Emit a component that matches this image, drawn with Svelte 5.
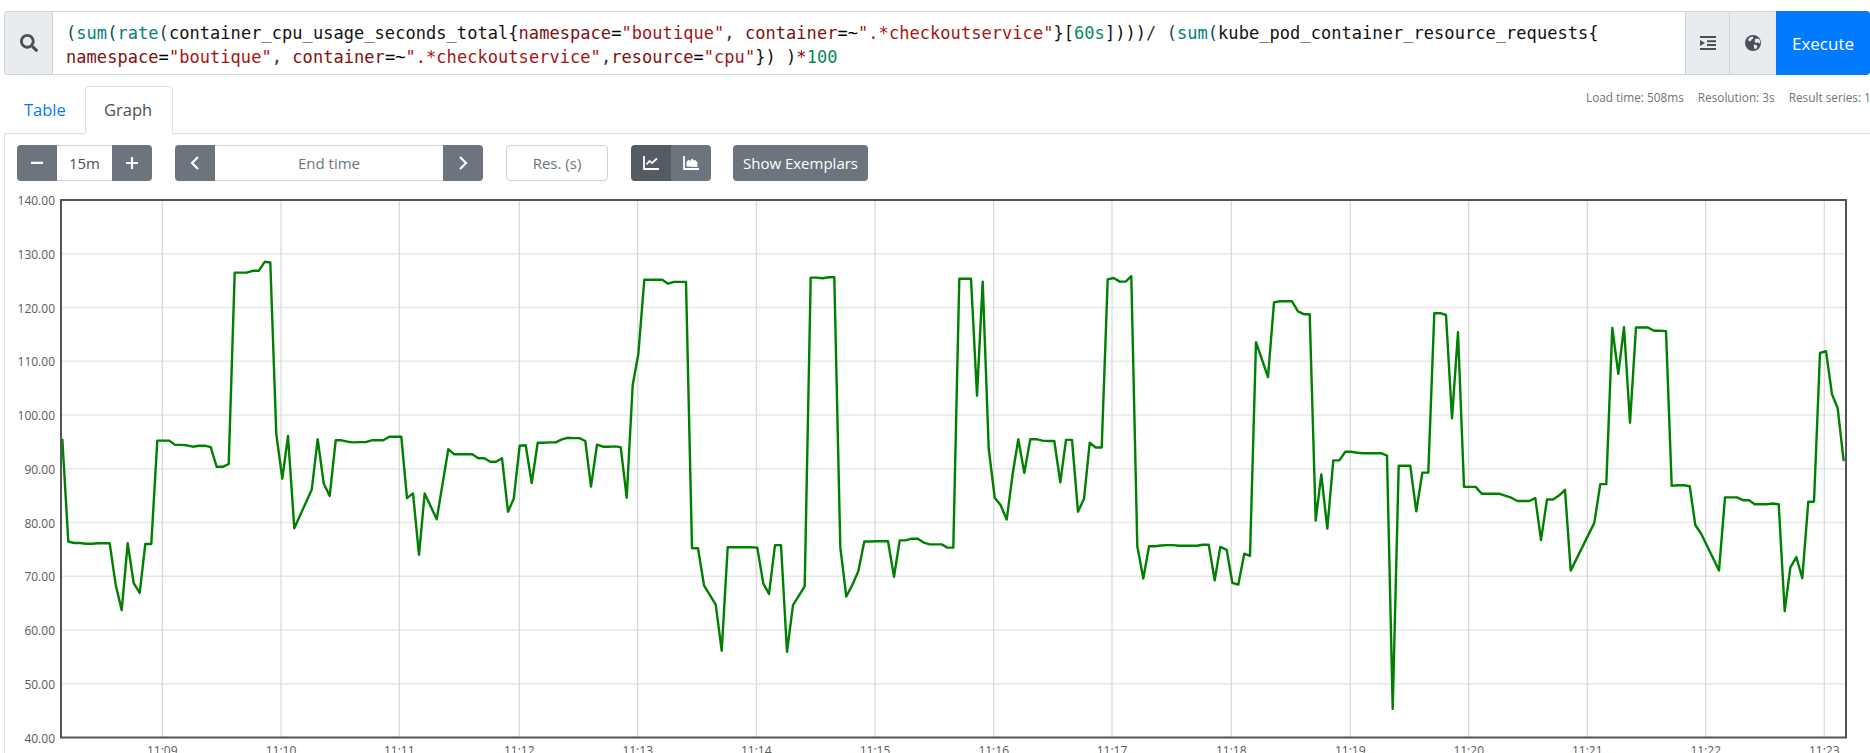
<script>
	// points are read off the reference in crop coordinates, grouped by crop offset
	const segments = [
		[0, [187,693,205,979,222,983,240,983,258,985,276,985,294,984,312,984,329,984,347,1100,365,1170,383,984,401,1095,419,1122,436,986,454,986,472,698,490,698,508,698,525,710,543,710,560,711,578,715,596,712,614,712,632,716,650,771,668,771,686,763,704,230,722,230,740,230,758,225,776,225,794,200,811,202,829,680,847,804,864,685,883,942,935,835,953,694,971,817,989,852,1007,697,1025,697,1043,701,1061,703,1079,702,1097,702,1115,697,1133,697,1150,697,1168,687,1186,687,1204,687,1221,858,1239,845,1257,1016,1274,845,1310,917,1345,722,1363,736,1381,736,1399,736,1417,736,1435,747,1453,747,1471,757,1488,757]],
		[500, [6,747,24,896,41,860,59,712,77,711,95,816,113,704,131,704,149,703,167,703,184,695,202,690,220,691,238,691,256,699,273,826,291,709,309,715,327,715,345,714,362,716,380,857,398,543,415,457,433,250,451,250,469,250,487,250,504,261,522,256,540,256,558,256,576,998,594,998,612,1101,647,1155,665,1283,683,995,700,995,718,995,736,995,754,995,772,996,790,1096,807,1125,825,989,843,989,861,1286,879,1156,914,1104,932,244,950,244,968,246,986,243,1003,243,1021,995,1039,1132,1057,1100,1075,1062,1093,979,1110,979,1128,978,1146,978,1164,978,1182,1077,1199,976,1217,976,1235,971,1253,971,1271,982,1289,987,1307,987,1325,987,1342,996,1360,996,1378,247,1396,247,1413,247,1431,573,1448,255,1466,720,1484,857]],
		[1000, [2,878,20,918,38,790,55,694,73,788,91,694,109,694,127,698,145,699,163,699,181,814,198,696,216,696,234,896,252,860,269,704,287,717,305,717,323,249,341,245,359,255,377,255,394,240,412,992,430,1082,447,992,465,992,483,990,501,989,519,989,537,991,555,991,573,991,591,991,608,988,626,988,644,1087,661,994,680,1002,697,1094,715,1099,733,1013,750,1019,768,424,804,521,822,313,840,310,858,310,876,310,894,338,911,346,929,346,947,921,964,792,982,943,1000,753,1018,753,1036,729,1054,729,1072,732,1090,733,1108,733,1126,733,1143,733,1161,740,1178,1445,1196,768,1214,768,1231,768,1249,895]],
		[1420, [7,787,25,787,43,343,61,343,78,348,96,636,114,396,132,827,150,827,167,827,185,846,203,846,221,846,239,846,257,852,274,857,292,866,310,866,328,866,346,858,363,975,381,862,399,862,417,851,435,835,452,1060,523,927,541,819,559,819,577,384,595,512,612,382,630,648,648,383,666,383,684,383,702,392,720,392,738,393,755,824,773,822,791,822,809,825,826,933,844,958,897,1060,915,856,933,856,951,856,969,864,987,864,1004,875,1022,875,1040,875,1058,873,1076,875,1094,1173,1111,1052,1129,1022,1147,1081,1165,868,1182,868,1200,454,1218,449,1236,569,1253,608,1271,755]]
	];

	const line = segments
		.flatMap(([offset, pts]) => {
			const out = [];
			for (let i = 0; i < pts.length; i += 2) {
				out.push(`${(offset + pts[i] / 3).toFixed(1)},${(190 + pts[i + 1] / 2.785).toFixed(1)}`);
			}
			return out;
		})
		.join(' ');

	const plot = { left: 61, right: 1846, top: 200, bottom: 737.5 };
	const yFor = (v) => plot.top + (140 - v) * 5.375;

	const yTicks = [140, 130, 120, 110, 100, 90, 80, 70, 60, 50, 40];
	const xTicks = [
		[162.3, '11:09'], [281, '11:10'], [399.3, '11:11'], [519.3, '11:12'], [637.7, '11:13'],
		[756.3, '11:14'], [875, '11:15'], [993.7, '11:16'], [1112, '11:17'], [1231.3, '11:18'],
		[1350.3, '11:19'], [1468.7, '11:20'], [1587.3, '11:21'], [1705.7, '11:22'], [1824.3, '11:23']
	];
</script>

<div class="page">
	<div class="query">
		<div class="addon search">
			<svg viewBox="0 0 512 512" width="18" height="18">
				<path fill="#495057" d="M505 442.7L405.3 343c-4.5-4.5-10.6-7-17-7H372c27.6-35.3 44-79.7 44-128C416 93.1 322.9 0 208 0S0 93.1 0 208s93.1 208 208 208c48.3 0 92.7-16.4 128-44v16.3c0 6.4 2.5 12.5 7 17l99.7 99.7c9.4 9.4 24.6 9.4 33.9 0l28.3-28.3c9.4-9.4 9.4-24.6.1-34zM208 336c-70.7 0-128-57.2-128-128 0-70.7 57.2-128 128-128 70.7 0 128 57.2 128 128 0 70.7-57.2 128-128 128z"/>
			</svg>
		</div>
		<div class="expr">
			<div class="row"><span class="p">(</span><span class="fn">sum</span><span class="p">(</span><span class="fn">rate</span><span class="p">(</span><span class="m">container_cpu_usage_seconds_total&#123;</span><span class="l">namespace</span><span class="o">=</span><span class="s">"boutique"</span><span class="c">{', '}</span><span class="l">container</span><span class="o">=~</span><span class="s">".*checkoutservice"</span><span class="m">&#125;[</span><span class="n">60s</span><span class="m">])))</span><span class="c">{'/ '}</span><span class="p">(</span><span class="fn">sum</span><span class="p">(</span><span class="m">kube_pod_container_resource_requests&#123;</span></div>
			<div class="row"><span class="l">namespace</span><span class="o">=</span><span class="s">"boutique"</span><span class="c">{', '}</span><span class="l">container</span><span class="o">=~</span><span class="s">".*checkoutservice"</span><span class="c">,</span><span class="l">resource</span><span class="o">=</span><span class="s">"cpu"</span><span class="m">{'}) )'}</span><span class="l">*</span><span class="n">100</span></div>
		</div>
		<div class="addon tool">
			<svg viewBox="0 0 16 16" width="16" height="16">
				<path fill="#495057" d="M0 1h16v2H0zM7 5.2h9v2H7zM7 9h9v2H7zM0 13h16v2H0zM0 5l5 3-5 3z"/>
			</svg>
		</div>
		<div class="addon tool wide">
			<svg viewBox="0 0 16 16" width="16" height="16">
				<circle cx="8" cy="8" r="8" fill="#495057"/>
				<path fill="#e9ecef" d="M4.5 2.6 7.6 1.6 8.6 3.4 6.6 4.4 6 6 4.2 6.2 3 5zM10 4l3.6-.6 1.6 2.6-.2 2.4-2.2-1-1.6.6-1.6-1.6zM9 9.2l2.6 1 1 1.4-2 2.6-1.2-.4-.6-2.6z"/>
			</svg>
		</div>
		<button class="execute">Execute</button>
	</div>

	<div class="tabs">
		<span class="tab">Table</span>
		<span class="tab active">Graph</span>
		<div class="metrics">
			<span>Load time: 508ms</span>
			<span>Resolution: 3s</span>
			<span>Result series: 1</span>
		</div>
	</div>

	<div class="pane">
		<div class="controls">
			<div class="group range">
				<span class="btn square">
					<svg viewBox="0 0 14 14" width="14" height="14"><path fill="#fff" d="M1 5.7h12v2.4H1z"/></svg>
				</span>
				<span class="field small">15m</span>
				<span class="btn square">
					<svg viewBox="0 0 14 14" width="14" height="14"><path fill="#fff" d="M5.9 1h2.2v4.9H13v2.2H8.100V13H5.900V8.100H1V5.900h4.900z"/></svg>
				</span>
			</div>
			<div class="group time">
				<span class="btn square">
					<svg viewBox="0 0 14 16" width="14" height="16"><path fill="none" stroke="#fff" stroke-width="2.2" d="M10 2 4 8l6 6"/></svg>
				</span>
				<span class="field grow">End time</span>
				<span class="btn square">
					<svg viewBox="0 0 14 16" width="14" height="16"><path fill="none" stroke="#fff" stroke-width="2.2" d="m4 2 6 6-6 6"/></svg>
				</span>
			</div>
			<span class="res">Res. (s)</span>
			<div class="group stack">
				<span class="btn square on">
					<svg viewBox="0 0 16 14" width="16" height="14">
						<path fill="none" stroke="#fff" stroke-width="1.8" d="M1 0v13h15"/>
						<path fill="none" stroke="#fff" stroke-width="1.8" d="M3.500 8.500 6.500 5l2.500 2 5-4.500"/>
					</svg>
				</span>
				<span class="btn square">
					<svg viewBox="0 0 16 14" width="16" height="14">
						<path fill="none" stroke="#fff" stroke-width="1.8" d="M1 0v13h15"/>
						<path fill="#fff" d="M3.500 10.500V6l2-2.500 1.500 1.500 2-2.500 2 2 1.500-.5 2 2.500v4.500z"/>
					</svg>
				</span>
			</div>
			<span class="btn exemplars">Show Exemplars</span>
		</div>

		<svg class="chart" viewBox="5 190 1865 563" width="1865" height="563">
			{#each yTicks as v}
				{#if v !== 140 && v !== 40}
					<line x1={plot.left} x2={plot.right} y1={yFor(v)} y2={yFor(v)} class="grid-h" />
				{/if}
				<text x="55" y={yFor(v) + 5} text-anchor="end" class="tick">{v.toFixed(2)}</text>
			{/each}
			{#each xTicks as [x, label]}
				<line x1={x} x2={x} y1={plot.top} y2={plot.bottom} class="grid-v" />
				<text {x} y="755" text-anchor="middle" class="tick">{label}</text>
			{/each}
			<polyline points={line} class="series" />
			<rect x={plot.left} y={plot.top} width={plot.right - plot.left} height={plot.bottom - plot.top} class="frame" />
		</svg>
	</div>
</div>

<style>
	:global(body) {
		margin: 0;
		background: #fff;
		overflow: hidden;
	}

	.page {
		width: 1870px;
		height: 753px;
		overflow: hidden;
		box-sizing: border-box;
		padding: 11px 0 0 4px;
		font-family: 'Open Sans', sans-serif;
		color: #495057;
	}

	.query {
		display: flex;
		height: 64px;
		box-sizing: border-box;
		border: 1px solid #ced4da;
		border-radius: 4px;
		border-right: none;
	}

	.addon {
		display: flex;
		align-items: center;
		justify-content: center;
		background: #e9ecef;
	}

	.search {
		width: 47px;
		border-right: 1px solid #ced4da;
		border-radius: 4px 0 0 4px;
	}

	.expr {
		flex: 1;
		padding: 9px 0 0 13px;
		font: 17px/24px 'DejaVu Sans Mono', monospace;
		letter-spacing: 0.05px;
		color: #111;
	}

	.row {
		white-space: pre;
	}

	.tool {
		box-sizing: border-box;
		width: 44px;
		border-left: 1px solid #ced4da;
	}

	.wide { width: 47px; }

	.execute {
		width: 94px;
		margin: -1px 0;
		border: none;
		border-radius: 0 4px 4px 0;
		background: #007bff;
		color: #fff;
		font: 17px 'Open Sans', sans-serif;
	}

	.p { color: #0b4f4f; }
	.fn { color: #008080; }
	.m { color: #111; }
	.l { color: #7d1010; }
	.o { color: #000; }
	.s { color: #a31515; }
	.c { color: #333; }
	.n { color: #09885a; }

	.tabs {
		display: flex;
		height: 48px;
		box-sizing: border-box;
		margin-top: 11px;
		border-bottom: 1px solid #dee2e6;
	}

	.tab {
		flex: none;
		box-sizing: border-box;
		width: 81px;
		height: 48px;
		padding: 12px 0 0 20px;
		font-size: 16.5px;
		line-height: 24px;
		color: #007bff;
	}

	.tab.active {
		width: 88px;
		padding: 11px 0 0 18px;
		color: #495057;
		background: #fff;
		border: 1px solid #dee2e6;
		border-bottom-color: #fff;
		border-radius: 4px 4px 0 0;
	}

	.metrics {
		display: flex;
		flex: none;
		gap: 14px;
		margin-left: 1413px;
		padding-top: 3px;
		font-size: 11.8px;
		line-height: 16px;
		color: #6c757d;
		white-space: nowrap;
	}

	.pane {
		border-left: 1px solid #dee2e6;
	}

	.controls {
		display: flex;
		align-items: stretch;
		height: 36px;
		padding: 11px 0 9px 12px;
		font-size: 15px;
	}

	.group {
		display: flex;
		border-radius: 4px;
		overflow: hidden;
	}

	.range { width: 135px; }
	.time { width: 308px; margin-left: 23px; }
	.stack { margin-left: 23px; }

	.btn {
		display: flex;
		align-items: center;
		justify-content: center;
		box-sizing: border-box;
		background: #6c757d;
		color: #fff;
	}

	.square {
		flex: none;
		width: 40px;
	}

	.on { background: #545b62; }

	.field {
		display: flex;
		align-items: center;
		justify-content: center;
		box-sizing: border-box;
		border-top: 1px solid #ced4da;
		border-bottom: 1px solid #ced4da;
		background: #fff;
	}

	.small { width: 55px; }
	.grow { flex: 1; color: #6c757d; }

	.res {
		display: flex;
		align-items: center;
		justify-content: center;
		box-sizing: border-box;
		width: 102px;
		margin-left: 23px;
		border: 1px solid #ced4da;
		border-radius: 4px;
		color: #6c757d;
	}

	.exemplars {
		width: 135px;
		margin-left: 22px;
		border-radius: 4px;
	}

	.chart {
		display: block;
	}

	.grid-h { stroke: #e8e8e8; stroke-width: 1.6; }
	.grid-v { stroke: #d8d8d8; stroke-width: 1.2; }
	.tick {
		font: 12px 'Open Sans', sans-serif;
		fill: #5a5a5a;
	}
	.series {
		fill: none;
		stroke: #008000;
		stroke-width: 2.4;
		stroke-linejoin: round;
	}
	.frame {
		fill: none;
		stroke: #545454;
		stroke-width: 2;
	}
</style>
